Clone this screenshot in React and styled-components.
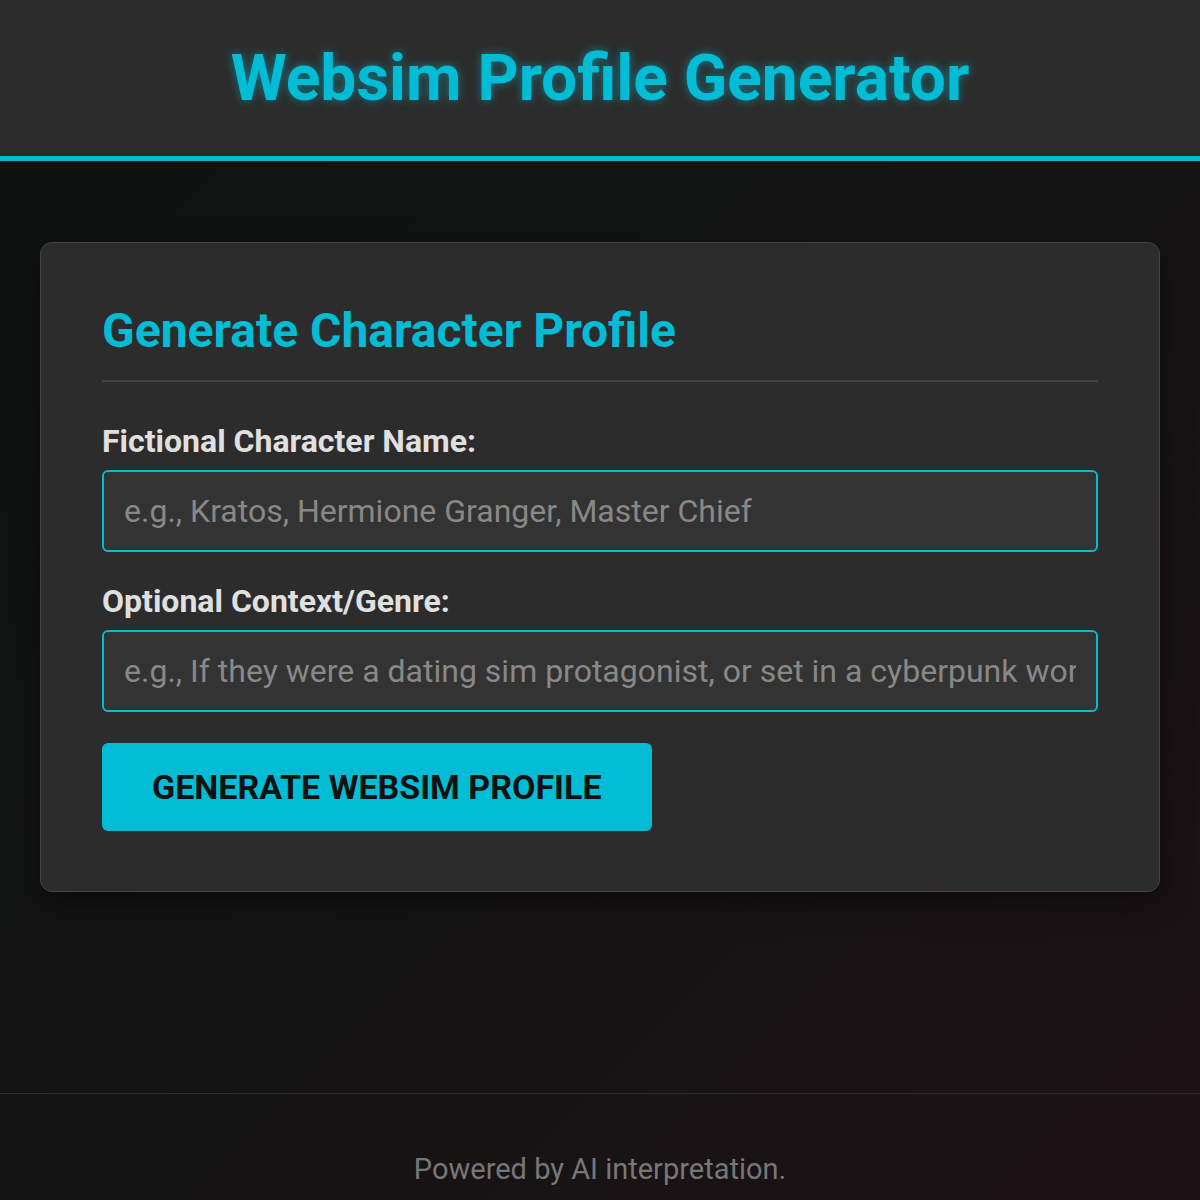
import React, { useState } from "react";
import styled, { createGlobalStyle } from "styled-components";

const GlobalStyle = createGlobalStyle`
  * {
    box-sizing: border-box;
  }
  html, body {
    margin: 0;
    padding: 0;
    height: 100%;
  }
  body {
    font-family: Roboto, "Liberation Sans", sans-serif;
    color: #e0e0e0;
    background: linear-gradient(135deg, #0f1212 0%, #141414 50%, #1d1216 100%);
    min-height: 100vh;
  }
`;

const Page = styled.div`
  display: flex;
  flex-direction: column;
  min-height: 100vh;
`;

const Header = styled.header`
  background: #2c2c2c;
  border-bottom: 5px solid #00bcd4;
  height: 161px;
  display: flex;
  align-items: center;
  justify-content: center;
`;

const Title = styled.h1`
  margin: 0;
  font-size: 64px;
  font-weight: 700;
  color: #00bcd4;
  text-shadow: 0 0 10px rgba(0, 188, 212, 0.55);
`;

const Main = styled.main`
  flex: 1;
  padding: 81px 40px 40px;
`;

const Card = styled.section`
  background: #2c2c2c;
  border: 1px solid #444;
  border-radius: 12px;
  padding: 60px 61px 60px;
  box-shadow: 0 10px 30px rgba(0, 0, 0, 0.5);
`;

const CardTitle = styled.h2`
  margin: 0;
  padding-bottom: 21px;
  border-bottom: 2px solid #444;
  font-size: 48px;
  line-height: 56px;
  font-weight: 700;
  color: #00bcd4;
`;

const Form = styled.form`
  display: flex;
  flex-direction: column;
  align-items: flex-start;
  margin-top: 41px;
`;

const Label = styled.label`
  font-size: 32px;
  font-weight: 700;
  color: #e0e0e0;
  margin-bottom: 10px;
  line-height: 37px;
`;

const Input = styled.input`
  width: 100%;
  height: 82px;
  padding: 0 20px;
  margin-bottom: 31px;
  background: #333;
  border: 2px solid #00bcd4;
  border-radius: 6px;
  color: #e0e0e0;
  font-family: Roboto, "Liberation Sans", sans-serif;
  font-size: 32px;
  outline: none;

  &::placeholder {
    color: #888;
  }
`;

const Button = styled.button`
  height: 88px;
  padding: 0 50px;
  background: #00bcd4;
  color: #111;
  border: none;
  border-radius: 6px;
  font-family: Roboto, "Liberation Sans", sans-serif;
  font-size: 34px;
  font-weight: 700;
  text-transform: uppercase;
  cursor: pointer;
`;

const Footer = styled.footer`
  border-top: 1px solid #2a2a2a;
  padding: 60px 0 16px;
  text-align: center;
  font-size: 29px;
  line-height: 30px;
  color: #777;
`;

const App = () => {
  const [name, setName] = useState("");
  const [context, setContext] = useState("");

  const handleSubmit = (event) => {
    event.preventDefault();
  };

  return (
    <>
      <GlobalStyle />
      <Page>
        <Header>
          <Title>Websim Profile Generator</Title>
        </Header>
        <Main>
          <Card>
            <CardTitle>Generate Character Profile</CardTitle>
            <Form onSubmit={handleSubmit}>
              <Label htmlFor="name">Fictional Character Name:</Label>
              <Input
                id="name"
                type="text"
                placeholder="e.g., Kratos, Hermione Granger, Master Chief"
                value={name}
                onChange={(event) => setName(event.target.value)}
              />
              <Label htmlFor="context">Optional Context/Genre:</Label>
              <Input
                id="context"
                type="text"
                placeholder="e.g., If they were a dating sim protagonist, or set in a cyberpunk world"
                value={context}
                onChange={(event) => setContext(event.target.value)}
              />
              <Button type="submit">Generate Websim Profile</Button>
            </Form>
          </Card>
        </Main>
        <Footer>Powered by AI interpretation.</Footer>
      </Page>
    </>
  );
};

export default App;
